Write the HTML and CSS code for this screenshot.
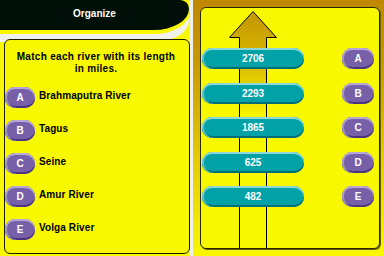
FILE: index.html
```html
<!DOCTYPE html>
<html lang="en">
<head>
    <meta charset="UTF-8">
    <title>Organize</title>
    <link rel="stylesheet" href="styles.css">
</head>
<body>

    <!-- Left side: question and items -->
    <div class="left">
        <div class="header">Organize</div>
        <div class="card">
            <p class="question">Match each river with its length in miles.</p>
            <div class="items">
                <div class="item"><span class="letter">A</span><span class="label">Brahmaputra River</span></div>
                <div class="item"><span class="letter">B</span><span class="label">Tagus</span></div>
                <div class="item"><span class="letter">C</span><span class="label">Seine</span></div>
                <div class="item"><span class="letter">D</span><span class="label">Amur River</span></div>
                <div class="item"><span class="letter">E</span><span class="label">Volga River</span></div>
            </div>
        </div>
    </div>

    <!-- Right side: ordered answers -->
    <div class="right">
        <div class="board">
            <svg class="arrow" width="180" height="242" viewBox="0 0 180 242">
                <defs>
                    <linearGradient id="arrowFill" x1="0" y1="0" x2="0" y2="110" gradientUnits="userSpaceOnUse">
                        <stop offset="0" stop-color="#c09400"/>
                        <stop offset="0.45" stop-color="#d8b400"/>
                        <stop offset="1" stop-color="#f8f800"/>
                    </linearGradient>
                </defs>
                <polygon points="53,3.5 76.5,29.5 66.5,29.5 66.5,242 39.5,242 39.5,29.5 29.5,29.5"
                         fill="url(#arrowFill)" stroke="#000" stroke-width="1"/>
            </svg>
            <div class="rows">
                <div class="row"><span class="value">2706</span><span class="letter">A</span></div>
                <div class="row"><span class="value">2293</span><span class="letter">B</span></div>
                <div class="row"><span class="value">1865</span><span class="letter">C</span></div>
                <div class="row"><span class="value">625</span><span class="letter">D</span></div>
                <div class="row"><span class="value">482</span><span class="letter">E</span></div>
            </div>
        </div>
    </div>

</body>
</html>
```

FILE: styles.css
```css
body {
    margin: 0;
    width: 384px;
    height: 256px;
    overflow: hidden;
    display: flex;
    font-family: "Liberation Sans", Arial, sans-serif;
    font-weight: bold;
    font-size: 10px;
}

.left {
    width: 193px;
    height: 256px;
    background: linear-gradient(to right, #f8f800 190px, #f0f0ec 190px);
}

.header {
    width: 189px;
    height: 30px;
    line-height: 28px;
    text-align: center;
    color: #fff;
    background-color: #001008;
    border-radius: 0 10px 40px 0 / 0 10px 24px 0;
    box-shadow: 0 4px 0 #f8f800, 0 12px 0 #f0f0ec;
}

.card {
    margin: 9px 0 0 4px;
    width: 184px;
    height: 213px;
    background-color: #f8f800;
    border: 1px solid #1c1c00;
    border-radius: 6px;
    position: relative;
}

.question {
    margin: 11px 10px 0 8px;
    line-height: 12px;
    text-align: center;
    letter-spacing: 0.3px;
}

.items {
    display: flex;
    flex-direction: column;
    gap: 12px;
    margin-top: 12px;
}

.item {
    display: flex;
    align-items: flex-start;
    gap: 4px;
}

.label {
    padding-top: 3px;
    letter-spacing: 0.1px;
}

.letter {
    width: 30px;
    height: 21px;
    line-height: 22px;
    text-align: center;
    color: #fff;
    border-radius: 10px;
    background-color: #7860a8;
    box-shadow: inset 0 2px 0 #b8a8d8, inset 2px 0 0 #a098c0, inset 0 -2px 0 #4a3680;
}

.right {
    width: 191px;
    height: 256px;
    background: linear-gradient(#c08800 0px, #c89800 60px, #e8d000 170px, #f8f800 256px);
}

.board {
    margin: 7px 0 0 7px;
    width: 178px;
    height: 240px;
    background-color: #f8f800;
    border: 1px solid #282800;
    border-radius: 6px;
    box-shadow: 1px 1px 0 #686000;
    position: relative;
    overflow: hidden;
}

.arrow {
    position: absolute;
    left: -1px;
    top: 0;
}

.rows {
    position: relative;
    display: flex;
    flex-direction: column;
    gap: 13.5px;
    padding: 40px 0 0 1px;
}

.row {
    display: flex;
    justify-content: space-between;
    width: 172px;
}

.row .letter {
    width: 32px;
}

.value {
    width: 102px;
    height: 21px;
    line-height: 22px;
    text-align: center;
    color: #fff;
    border-radius: 10px;
    background-color: #00a2a8;
    box-shadow: inset 0 2px 0 #90d8d8, inset 2px 0 0 #60c0c0, inset 0 -2px 0 #006e74;
}
```
